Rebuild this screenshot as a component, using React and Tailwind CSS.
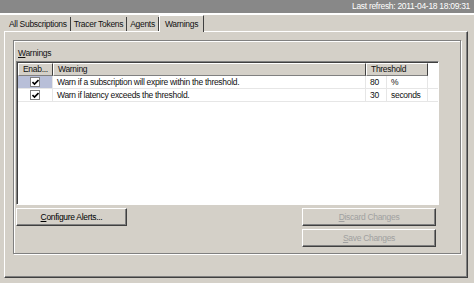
const rows = [
  { text: "Warn if a subscription will expire within the threshold.", value: "80", unit: "%", active: true },
  { text: "Warn if latency exceeds the threshold.", value: "30", unit: "seconds", active: false },
];

const Check = () => (
  <span className="flex h-[10px] w-[10px] items-center justify-center border border-[#808080] bg-white">
    <svg width="7" height="7" viewBox="0 0 7 7">
      <path d="M0.5 3 L2.5 5 L6.5 1" stroke="#000" strokeWidth="1.6" fill="none" />
    </svg>
  </span>
);

const HeaderCell = ({ className, children }) => (
  <div className={`flex h-full items-center border-t border-l border-t-white border-l-white border-b border-r border-b-[#808080] border-r-[#404040] bg-[#d4d0c8] px-[4px] ${className}`}>
    {children}
  </div>
);

const WinButton = ({ children, disabled, className }) => (
  <button
    type="button"
    className={`flex h-[18px] items-center justify-center border border-t-white border-l-white border-b-[#404040] border-r-[#404040] bg-[#d4d0c8] text-[8.5px] tracking-[-0.3px] shadow-[inset_-1px_-1px_0_#808080] ${disabled ? "text-[#a0a0a0]" : "text-black"} ${className}`}
  >
    {children}
  </button>
);

const tabs = ["All Subscriptions", "Tracer Tokens", "Agents"];

export default function App() {
  return (
    <div
      className="flex h-[283px] w-[474px] flex-col overflow-hidden bg-[#d4d0c8] text-[8.5px] tracking-[-0.3px] text-[#111]"
      style={{ fontFamily: '"Liberation Sans", Arial, sans-serif' }}
    >
      <div className="flex h-[13px] items-center justify-end bg-[#888888] pr-[4px] text-[8.5px] leading-none text-white">
        Last refresh: 2011-04-18 18:09:31
      </div>
      <div className="h-[2px] bg-white" />

      <div className="flex h-[16px] items-end pl-[6px] pt-[2px]">
        {tabs.map((t) => (
          <div key={t} className="flex h-[14px] items-center border-r border-r-[#404040] px-[3px] leading-none">
            {t}
          </div>
        ))}
        <div className="relative -mb-[1px] flex h-[17px] items-center border-t border-l border-t-white border-l-white border-r border-r-[#404040] bg-[#d4d0c8] px-[5px] leading-none">
          Warnings
        </div>
      </div>

      <div className="mx-[4px] flex h-[247px] w-[464px] flex-col border border-t-white border-l-white border-b-[#404040] border-r-[#404040] px-[8px] pt-[8px] shadow-[inset_-1px_-1px_0_#808080]">
        <div className="flex h-[214px] w-[448px] flex-col border border-[#808080] shadow-[1px_1px_0_#ffffff,inset_1px_1px_0_#ffffff] px-[2px] pt-[5px]">
          <div className="ml-[2px] h-[14px] leading-[14px]">
            <span className="underline">W</span>arnings
          </div>
          <div className="mt-[1px] flex h-[144px] w-[423px] flex-col border border-t-[#808080] border-l-[#808080] border-b-white border-r-white bg-white shadow-[inset_1px_1px_0_#404040]">
            <div className="ml-[1px] mt-[1px] flex h-[13px] leading-none">
              <HeaderCell className="w-[35px]">Enab...</HeaderCell>
              <HeaderCell className="w-[313px]">Warning</HeaderCell>
              <HeaderCell className="w-[62px]">Threshold</HeaderCell>
            </div>
            {rows.map((r) => (
              <div key={r.text} className="ml-[1px] flex h-[13px] border-b border-[#e6e6e6] leading-none">
                <div className={`flex w-[35px] items-center justify-center border-r border-[#e6e6e6] ${r.active ? "bg-[#b8bfd8]" : ""}`}>
                  <Check />
                </div>
                <div className="flex w-[313px] items-center border-r border-[#e6e6e6] px-[4px]">{r.text}</div>
                <div className="flex w-[21px] items-center border-r border-[#e6e6e6] px-[4px]">{r.value}</div>
                <div className="flex w-[41px] items-center border-r border-[#e6e6e6] px-[4px]">{r.unit}</div>
              </div>
            ))}
          </div>
          <div className="mt-[3px] flex justify-between pr-[22px]">
            <WinButton className="w-[111px]">
              <span>
                <span className="underline">C</span>onfigure Alerts...
              </span>
            </WinButton>
            <div className="flex flex-col gap-[3px]">
              <WinButton disabled className="w-[134px]">
                <span>
                  <span className="underline">D</span>iscard Changes
                </span>
              </WinButton>
              <WinButton disabled className="w-[134px]">
                <span>
                  <span className="underline">S</span>ave Changes
                </span>
              </WinButton>
            </div>
          </div>
        </div>
      </div>
    </div>
  );
}
